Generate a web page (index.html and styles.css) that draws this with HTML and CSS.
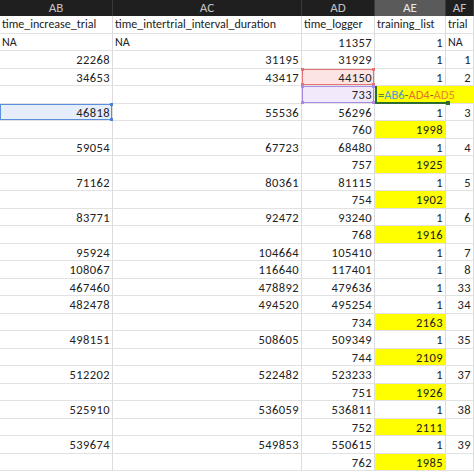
FILE: index.html
```html
<!DOCTYPE html>
<html>
<head>
<meta charset="utf-8">
<link rel="stylesheet" href="styles.css">
</head>
<body>
<div class="sheet">
  <div class="h">AB</div><div class="h">AC</div><div class="h">AD</div><div class="h sel">AE</div><div class="h">AF</div>

  <div class="c">time_increase_trial</div><div class="c">time_intertrial_interval_duration</div><div class="c">time_logger</div><div class="c">training_list</div><div class="c">trial</div>
  <div class="c">NA</div><div class="c">NA</div><div class="c n">11357</div><div class="c n">1</div><div class="c">NA</div>
  <div class="c n">22268</div><div class="c n">31195</div><div class="c n">31929</div><div class="c n">1</div><div class="c n">1</div>
  <div class="c n">34653</div><div class="c n">43417</div><div class="c n ref-red"><i class="k tl"></i><i class="k tr"></i><i class="k bl"></i><i class="k br"></i>44150</div><div class="c n">1</div><div class="c n">2</div>
  <div class="c"></div><div class="c"></div><div class="c n ref-purple"><i class="k tl"></i><i class="k tr"></i><i class="k bl"></i><i class="k br"></i>733</div><div class="c edit"><span class="f-eq">=</span><span class="f-b">AB6</span><span class="f-op">-</span><span class="f-r">AD4</span><span class="f-op">-</span><span class="f-p">AD5</span><i class="gl"></i></div>
  <div class="c n ref-blue"><i class="k tr"></i><i class="k br"></i>46818</div><div class="c n">55536</div><div class="c n">56296</div><div class="c n">1</div><div class="c n">3</div>
  <div class="c"></div><div class="c"></div><div class="c n">760</div><div class="c n y">1998</div><div class="c"></div>
  <div class="c n">59054</div><div class="c n">67723</div><div class="c n">68480</div><div class="c n">1</div><div class="c n">4</div>
  <div class="c"></div><div class="c"></div><div class="c n">757</div><div class="c n y">1925</div><div class="c"></div>
  <div class="c n">71162</div><div class="c n">80361</div><div class="c n">81115</div><div class="c n">1</div><div class="c n">5</div>
  <div class="c"></div><div class="c"></div><div class="c n">754</div><div class="c n y">1902</div><div class="c"></div>
  <div class="c n">83771</div><div class="c n">92472</div><div class="c n">93240</div><div class="c n">1</div><div class="c n">6</div>
  <div class="c"></div><div class="c"></div><div class="c n">768</div><div class="c n y">1916</div><div class="c"></div>
  <div class="c n">95924</div><div class="c n">104664</div><div class="c n">105410</div><div class="c n">1</div><div class="c n">7</div>
  <div class="c n">108067</div><div class="c n">116640</div><div class="c n">117401</div><div class="c n">1</div><div class="c n">8</div>
  <div class="c n">467460</div><div class="c n">478892</div><div class="c n">479636</div><div class="c n">1</div><div class="c n">33</div>
  <div class="c n">482478</div><div class="c n">494520</div><div class="c n">495254</div><div class="c n">1</div><div class="c n">34</div>
  <div class="c"></div><div class="c"></div><div class="c n">734</div><div class="c n y">2163</div><div class="c"></div>
  <div class="c n">498151</div><div class="c n">508605</div><div class="c n">509349</div><div class="c n">1</div><div class="c n">35</div>
  <div class="c"></div><div class="c"></div><div class="c n">744</div><div class="c n y">2109</div><div class="c"></div>
  <div class="c n">512202</div><div class="c n">522482</div><div class="c n">523233</div><div class="c n">1</div><div class="c n">37</div>
  <div class="c"></div><div class="c"></div><div class="c n">751</div><div class="c n y">1926</div><div class="c"></div>
  <div class="c n">525910</div><div class="c n">536059</div><div class="c n">536811</div><div class="c n">1</div><div class="c n">38</div>
  <div class="c"></div><div class="c"></div><div class="c n">752</div><div class="c n y">2111</div><div class="c"></div>
  <div class="c n">539674</div><div class="c n">549853</div><div class="c n">550615</div><div class="c n">1</div><div class="c n">39</div>
  <div class="c"></div><div class="c"></div><div class="c n">762</div><div class="c n y">1985</div><div class="c"></div>
</div>
</body>
</html>
```

FILE: styles.css
```css
html, body {
  margin: 0;
  padding: 0;
  background: #ffffff;
}
body {
  width: 474px;
  height: 472px;
  overflow: hidden;
  font-family: Carlito, "Open Sans", "Liberation Sans", sans-serif;
}
.sheet {
  display: grid;
  grid-template-columns: 113px 189px 73px 71px 28px;
  grid-template-rows: 16px;
  grid-auto-rows: 17.5px;
  font-size: 12px;
  color: #222222;
}
.h {
  background: #1f1f1f;
  color: #c4c4c4;
  text-align: center;
  line-height: 16px;
  font-size: 13px;
  border-right: 1px solid #3a3a3a;
  box-sizing: border-box;
}
.h.sel {
  background: #5a5a5a;
  color: #e8e8e8;
}
.c {
  position: relative;
  box-sizing: border-box;
  border-right: 1px solid #dcdcdc;
  border-bottom: 1px solid #e2e2e2;
  padding: 0 3px 0 2px;
  line-height: 17px;
  white-space: nowrap;
  overflow: hidden;
}
.n {
  text-align: right;
  font-size: 12.5px;
  letter-spacing: 0.4px;
  padding-right: 2px;
}
.y {
  background: #ffff00;
}
.ref-red {
  background: #fde4e4;
  box-shadow: inset 0 0 0 1px #e57373;
  overflow: visible;
}
.ref-red .k { background: #e57373; }
.ref-purple {
  background: #f2eafa;
  box-shadow: inset 0 0 0 1px #a98be0;
  overflow: visible;
}
.ref-purple .k { background: #a98be0; }
.ref-blue {
  background: #e6eefb;
  box-shadow: inset 0 0 0 1px #5b8fdc;
  overflow: visible;
}
.ref-blue .k { background: #4a7fd4; }
.k {
  position: absolute;
  width: 3px;
  height: 3px;
}
.k.tl { left: -1px; top: -1px; }
.k.tr { right: -1px; top: -1px; }
.k.bl { left: -1px; bottom: -1px; }
.k.br { right: -1px; bottom: -1px; }
.edit {
  grid-column: span 2;
  background: #ffff00;
  border-left: 2px solid #2e6b2e;
  border-right: none;
  padding-left: 1px;
  font-size: 12.5px;
  overflow: visible;
}
.gl {
  position: absolute;
  left: -2px;
  bottom: -1px;
  width: 73px;
  height: 2px;
  background: #2e6b2e;
}
.gl::after {
  content: "";
  position: absolute;
  right: -2px;
  bottom: -1px;
  width: 4px;
  height: 4px;
  background: #2e6b2e;
}
.f-eq { color: #4f8f3a; }
.f-b { color: #4a9ad0; }
.f-op { color: #5a6a3a; }
.f-r { color: #e8702a; }
.f-p { color: #e8862a; }
```
